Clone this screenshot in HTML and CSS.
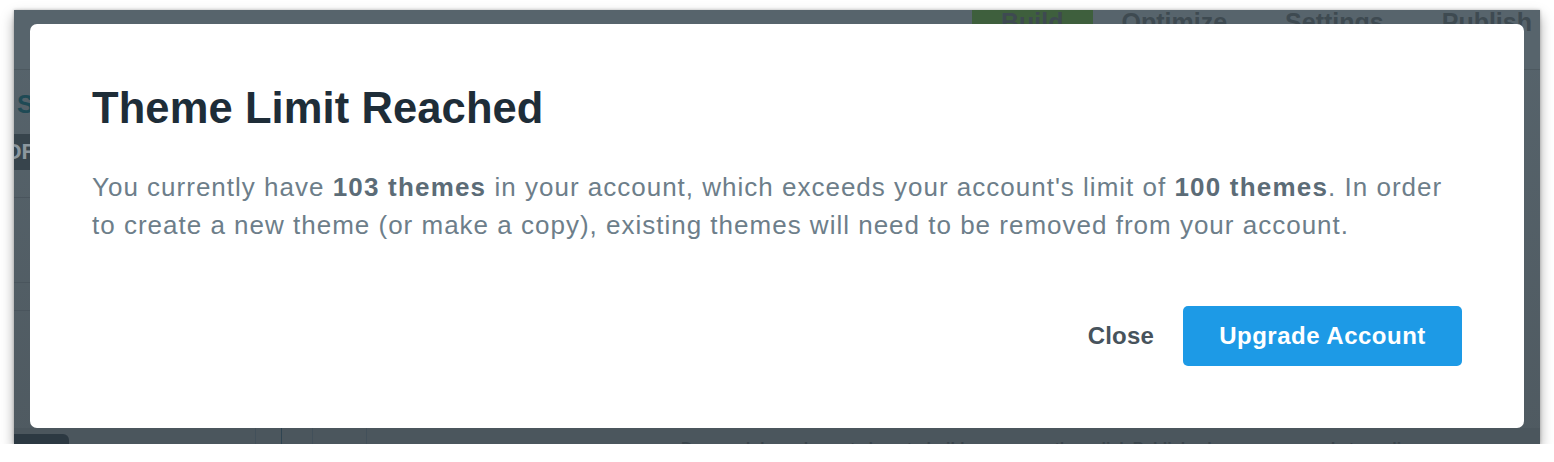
FILE: index.html
```html
<!DOCTYPE html>
<html lang="en">
<head>
<meta charset="utf-8">
<title>Theme Limit Reached</title>
<link rel="stylesheet" href="styles.css">
</head>
<body>
<div class="window">
  <div class="app">
    <header class="topbar">
      <div class="brand"></div>
      <nav class="tabs">
        <span class="tab tab-active">Build</span>
        <span class="tab">Optimize</span>
        <span class="tab">Settings</span>
        <span class="tab">Publish</span>
      </nav>
    </header>
    <div class="main">
      <aside class="sidebar">
        <div class="side-title">Styles</div>
        <div class="side-badge">COLOR</div>
        <div class="side-row"></div>
        <div class="side-row side-row-tall"></div>
        <div class="side-row"></div>
      </aside>
      <section class="content"></section>
    </div>
    <footer class="statusbar">
      <div class="status-side"><span class="status-pill"></span></div>
      <div class="status-cell status-cell-a"></div>
      <div class="status-cell status-cell-b"></div>
      <div class="status-cell status-cell-c"></div>
      <div class="status-cell status-text">Drag and drop elements here to build your page, then click Publish when you are ready to go live</div>
    </footer>
  </div>
  <div class="overlay">
    <div class="modal" role="dialog" aria-labelledby="modal-title">
      <h1 class="modal-title" id="modal-title">Theme Limit Reached</h1>
      <p class="modal-text">You currently have <strong>103 themes</strong> in your account, which exceeds your account's limit of <strong>100 themes</strong>. In order to create a new theme (or make a copy), existing themes will need to be removed from your account.</p>
      <div class="modal-actions">
        <button class="btn-link" type="button">Close</button>
        <button class="btn-primary" type="button">Upgrade Account</button>
      </div>
    </div>
  </div>
</div>
</body>
</html>
```
FILE: styles.css
```css
* {
  box-sizing: border-box;
}

html, body {
  margin: 0;
  padding: 0;
  background: #ffffff;
}

body {
  font-family: "Liberation Sans", Arial, Helvetica, sans-serif;
  padding: 10px 14px 0;
}

.window {
  position: relative;
  width: 1526px;
  height: 434px;
  overflow: hidden;
  box-shadow: 0 6px 12px rgba(0, 0, 0, 0.35), 0 0 3px rgba(0, 0, 0, 0.25);
}

/* ---------- app underneath the overlay ---------- */
.app {
  display: flex;
  flex-direction: column;
  height: 100%;
  background: linear-gradient(#57646c, #4f5a61);
}

.topbar {
  display: flex;
  height: 60px;
  border-bottom: 1px solid #4d5960;
  background: #57646c;
  flex-shrink: 0;
}

.brand {
  width: 958px;
  flex-shrink: 0;
}

.tabs {
  display: flex;
  flex-shrink: 0;
}

.tab {
  padding: 0 29px;
  font-size: 25px;
  line-height: 25px;
  font-weight: 700;
  color: #3e4a51;
  white-space: nowrap;
}

.tab-active {
  background: #3e5f3d;
}

.main {
  flex: 1;
  display: flex;
  min-height: 0;
}

.sidebar {
  width: 241px;
  flex-shrink: 0;
  display: flex;
  flex-direction: column;
}

.side-title {
  padding: 19px 0 0 3px;
  font-size: 25px;
  line-height: 30px;
  font-weight: 700;
  color: #1f4a55;
  height: 64px;
}

.side-badge {
  height: 36px;
  background: #37444c;
  color: #8c979e;
  font-size: 22px;
  font-weight: 700;
  line-height: 36px;
  text-indent: -56px;
}

.side-row {
  height: 28px;
  border-bottom: 1px solid #4a555d;
}

.side-row-tall {
  height: 85px;
}

.side-row:first-of-type {
  height: 25px;
}

.content {
  flex: 1;
}

.statusbar {
  display: flex;
  height: 16px;
  flex-shrink: 0;
  background: #4b565d;
}

.status-side {
  width: 241px;
  flex-shrink: 0;
  display: flex;
  align-items: flex-end;
}

.status-pill {
  display: block;
  width: 55px;
  height: 10px;
  background: #2c3942;
  border-top-right-radius: 6px;
}

.status-cell {
  border-left: 1px solid #42505a;
  overflow: hidden;
}

.status-cell-a {
  width: 26px;
}

.status-cell-b {
  width: 31px;
  border-left-color: #2f4451;
}

.status-cell-c {
  width: 54px;
}

.status-text {
  flex: 1;
  padding: 13px 0 0 314px;
  font-size: 16px;
  line-height: 16px;
  font-weight: 700;
  color: #3a454c;
  white-space: nowrap;
}

/* ---------- modal overlay ---------- */
.overlay {
  position: absolute;
  inset: 0;
  display: flex;
  justify-content: center;
  align-items: flex-start;
  padding: 14px 16px 0;
}

.modal {
  width: 1494px;
  background: #ffffff;
  border-radius: 7px;
  padding: 58px 62px 62px;
}

.modal-title {
  margin: 0;
  font-size: 43.5px;
  line-height: 52px;
  font-weight: 700;
  color: #1e2d38;
  letter-spacing: 0.1px;
}

.modal-text {
  margin: 34px 0 0;
  font-size: 26px;
  line-height: 38px;
  letter-spacing: 1px;
  color: #6d7e8a;
}

.modal-text strong {
  font-weight: 700;
  color: #5c6c77;
  letter-spacing: 1.2px;
}

.modal-actions {
  display: flex;
  justify-content: flex-end;
  align-items: center;
  gap: 29px;
  margin-top: 62px;
}

.btn-link {
  border: 0;
  background: none;
  padding: 0;
  font-family: inherit;
  font-size: 24px;
  font-weight: 700;
  color: #47535c;
  letter-spacing: 0.2px;
  cursor: pointer;
}

.btn-primary {
  border: 0;
  height: 60px;
  width: 279px;
  border-radius: 5px;
  background: #1d9ae6;
  color: #ffffff;
  font-family: inherit;
  font-size: 24px;
  font-weight: 700;
  letter-spacing: 0.5px;
  cursor: pointer;
}
```
